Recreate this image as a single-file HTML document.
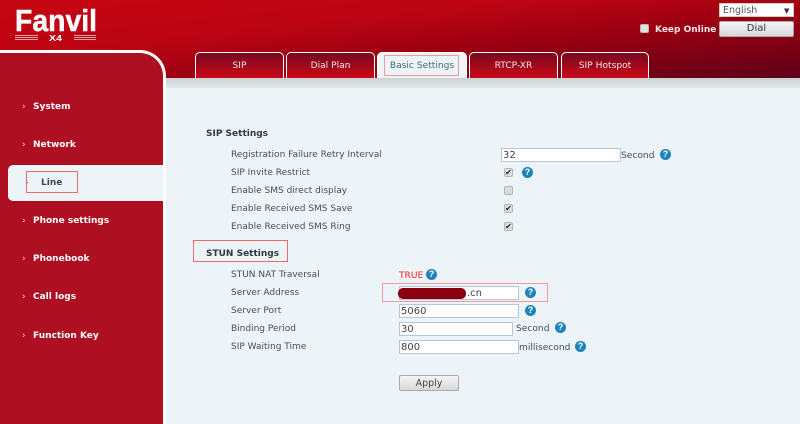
<!DOCTYPE html>
<html style="background:#edf4f8"><head><meta charset="utf-8"><style>
html,body{margin:0;padding:0;width:800px;height:424px;overflow:hidden}
body{position:relative;font-family:"DejaVu Sans",sans-serif;font-size:9.1px;color:#3f4f5d;filter:blur(.3px)}
div,span{position:absolute;white-space:nowrap;box-sizing:border-box}
.bg{left:0;top:0;width:800px;height:424px;background:#edf4f8}
.hdr{left:0;top:0;width:800px;height:78px;background:linear-gradient(174deg,#c70512 0%,#bb0413 35%,#980011 62%,#5e0018 100%)}
.band{left:0;top:78px;width:800px;height:10px;background:linear-gradient(#cdd0d2,#e3e7e9)}
.side{left:-6px;top:50px;width:172px;height:380px;background:#ae1022;border:3px solid #fff;border-left:0;border-bottom:0;border-top-right-radius:26px}
.tab{top:52px;height:26px;border:1px solid #fff;border-bottom:0;border-radius:5px 5px 0 0;background:linear-gradient(#76091f,#cb0717);color:#fbe6e8;text-align:center;line-height:27px}
.m{left:33px;color:#fff;font-weight:bold;font-size:9px;line-height:12px}
.ar{left:22px;color:#f3d8dc;font-size:9px;line-height:12px}
.l{left:231px;line-height:12px;font-size:9px}
.h{left:206px;font-weight:bold;color:#2b3a47;line-height:12px;font-size:9px}
.in{height:14px;background:#fff;border:1px solid #b4c8da;line-height:14px;padding-left:1px;color:#444;font-size:10px}
.q{width:11px;height:11px;border-radius:50%;background:#1d83bb;color:#fff;font:bold 9px/11px "Liberation Sans",sans-serif;text-align:center}
.c{left:504px;width:9px;height:9px;background:#dcdcdc;border:1px solid #b5b5b5;border-radius:2px;color:#222;font-size:8px;line-height:7px;text-align:center}
.r{border:1px solid #ee6a6e}
.btn{background:linear-gradient(#f5f5f5,#d8d8d8);border:1px solid #aaa;border-radius:2px;text-align:center;color:#444}
</style></head><body>
<div class="bg"></div>
<div class="hdr"></div>
<div class="band"></div>
<div class="side"></div>

<svg style="position:absolute;left:0;top:0" width="110" height="46">
<text x="15" y="31" font-family="Liberation Sans" font-weight="bold" font-size="31" fill="#fff" stroke="#fff" stroke-width=".5" textLength="82" lengthAdjust="spacingAndGlyphs">Fanvil</text>
<text x="49" y="41" font-family="Liberation Sans" font-weight="bold" font-size="8.5" fill="#fff" textLength="13" lengthAdjust="spacingAndGlyphs">X4</text>
<g fill="#e8a0a8"><rect x="15" y="35" width="23" height="1"/><rect x="15" y="37" width="23" height="1"/><rect x="15" y="39" width="23" height="1"/><rect x="74" y="35" width="22" height="1"/><rect x="74" y="37" width="22" height="1"/><rect x="74" y="39" width="22" height="1"/></g>
</svg>

<div style="left:719px;top:3px;width:75px;height:14px;background:#fff;border:1px solid #ccc;color:#555;line-height:14px;padding-left:3px;font-size:9.5px">English<span style="left:64px;top:0;font-size:7px;color:#333">▼</span></div>
<div class="btn" style="left:719px;top:21px;width:75px;height:16px;line-height:14px;color:#333;font-size:10px">Dial</div>
<div style="left:640px;top:24px;width:9px;height:9px;background:#e2e2e2;border:1px solid #bbb;border-radius:2px"></div>
<div style="left:655px;top:24px;color:#fbe6e8;font-weight:bold;font-size:9px;line-height:12px">Keep Online</div>

<div class="tab" style="left:195px;width:89px">SIP</div>
<div class="tab" style="left:286px;width:89px">Dial Plan</div>
<div class="tab" style="left:377px;width:90px;background:#edf4f8;color:#4a6478">Basic Settings</div>
<div class="r" style="left:384px;top:55px;width:75px;height:21px;border-color:#f09a9c"></div>
<div class="tab" style="left:469px;width:89px">RTCP-XR</div>
<div class="tab" style="left:561px;width:88px">SIP Hotspot</div>

<div class="ar" style="top:101px">›</div><div class="m" style="top:101px">System</div>
<div class="ar" style="top:139px">›</div><div class="m" style="top:139px">Network</div>
<div style="left:8px;top:165px;width:155px;height:36px;background:#edf4f8;border-radius:5px 0 0 5px"></div>
<div class="ar" style="left:25px;top:177px;color:#555">›</div><div class="m" style="left:41px;top:177px;color:#3d4a56">Line</div>
<div class="r" style="left:26px;top:171px;width:52px;height:22px"></div>
<div class="ar" style="top:215px">›</div><div class="m" style="top:215px">Phone settings</div>
<div class="ar" style="top:253px">›</div><div class="m" style="top:253px">Phonebook</div>
<div class="ar" style="top:291px">›</div><div class="m" style="top:291px">Call logs</div>
<div class="ar" style="top:330px">›</div><div class="m" style="top:330px">Function Key</div>

<div class="h" style="top:128px">SIP Settings</div>
<div class="l" style="top:149px">Registration Failure Retry Interval</div>
<div class="l" style="top:167px">SIP Invite Restrict</div>
<div class="l" style="top:185px">Enable SMS direct display</div>
<div class="l" style="top:203px">Enable Received SMS Save</div>
<div class="l" style="top:221px">Enable Received SMS Ring</div>
<div class="in" style="left:501px;top:148px;width:120px">32</div>
<div style="left:621px;top:150px;line-height:12px">Second</div>
<div class="q" style="left:660px;top:149px">?</div>
<div class="c" style="top:168px">✔</div>
<div class="q" style="left:522px;top:167px">?</div>
<div class="c" style="top:186px"></div>
<div class="c" style="top:204px">✔</div>
<div class="c" style="top:222px">✔</div>

<div class="h" style="top:248px">STUN Settings</div>
<div class="r" style="left:193px;top:240px;width:95px;height:22px"></div>
<div class="l" style="top:269px">STUN NAT Traversal</div>
<div class="l" style="top:287px">Server Address</div>
<div class="l" style="top:305px">Server Port</div>
<div class="l" style="top:323px">Binding Period</div>
<div class="l" style="top:341px">SIP Waiting Time</div>

<div style="left:399px;top:270px;color:#f22;line-height:12px">TRUE</div>
<div class="q" style="left:426px;top:269px">?</div>
<div class="in" style="left:399px;top:286px;width:120px;padding-left:67px">.cn</div>
<div style="left:398px;top:288px;width:68px;height:11px;background:#8a0010;border-radius:5px"></div>
<div class="r" style="left:382px;top:283px;width:166px;height:19px;border-color:#f09a9c"></div>
<div class="q" style="left:525px;top:287px">?</div>
<div class="in" style="left:399px;top:304px;width:120px">5060</div>
<div class="q" style="left:525px;top:305px">?</div>
<div class="in" style="left:399px;top:322px;width:114px">30</div>
<div style="left:516px;top:323px;line-height:12px">Second</div>
<div class="q" style="left:555px;top:322px">?</div>
<div class="in" style="left:399px;top:340px;width:120px">800</div>
<div style="left:519px;top:342px;line-height:12px">millisecond</div>
<div class="q" style="left:575px;top:341px">?</div>
<div class="btn" style="left:399px;top:375px;width:60px;height:16px;line-height:15px;font-size:9.5px">Apply</div>
</body></html>
